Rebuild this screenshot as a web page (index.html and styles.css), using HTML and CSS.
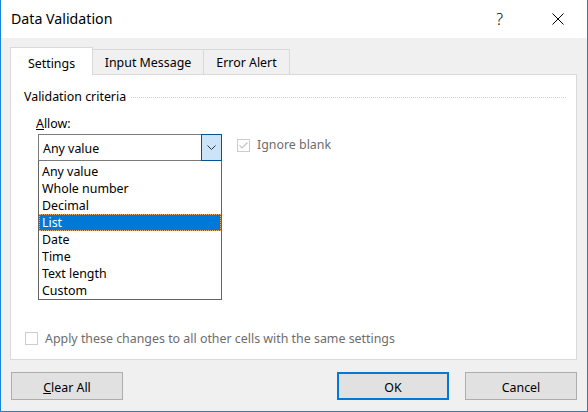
FILE: index.html
```html
<!DOCTYPE html>
<html>
<head>
<meta charset="utf-8">
<link rel="stylesheet" href="styles.css">
</head>
<body>
<div class="window">
  <div class="titlebar">
    <span class="title">Data Validation</span>
    <span class="help">?</span>
    <svg class="close" width="12" height="12" viewBox="0 0 12 12"><path d="M0.5 0.5 L11.5 11.5 M11.5 0.5 L0.5 11.5" stroke="#000" stroke-width="1" fill="none"/></svg>
  </div>
  <div class="body">
    <div class="tabs">
      <div class="tab active">Settings</div>
      <div class="tab tab-input">Input Message</div>
      <div class="tab tab-error">Error Alert</div>
    </div>
    <div class="panel">
      <div class="group-title"><span>Validation criteria</span><span class="rule"></span></div>
      <div class="allow-label"><u>A</u>llow:</div>
      <div class="criteria-row">
        <div class="combo">
          <span class="combo-text">Any value</span>
          <span class="combo-btn"><svg width="9" height="5" viewBox="0 0 9 5"><path d="M0.5 0.5 L4.5 4.5 L8.5 0.5" stroke="#333" stroke-width="1" fill="none"/></svg></span>
          <div class="dropdown">
            <div class="opt">Any value</div>
            <div class="opt">Whole number</div>
            <div class="opt">Decimal</div>
            <div class="opt selected">List</div>
            <div class="opt">Date</div>
            <div class="opt">Time</div>
            <div class="opt">Text length</div>
            <div class="opt">Custom</div>
          </div>
        </div>
        <label class="check disabled ignore">
          <span class="box"><svg width="11" height="11" viewBox="0 0 11 11"><path d="M1.5 5.5 L4 8 L9.5 2.5" stroke="#c6c6c6" stroke-width="1.2" fill="none"/></svg></span>
          <span class="check-text">Ignore blank</span>
        </label>
      </div>
      <label class="check disabled apply">
        <span class="box"></span>
        <span class="check-text">Apply these changes to all other cells with the same settings</span>
      </label>
    </div>
    <div class="buttons">
      <button class="btn"><u>C</u>lear All</button>
      <span class="spacer"></span>
      <button class="btn default">OK</button>
      <button class="btn cancel">Cancel</button>
    </div>
  </div>
</div>
</body>
</html>
```
FILE: styles.css
```css
* { box-sizing: border-box; }
html, body { margin: 0; padding: 0; }
body {
  font-family: "Segoe UI", "Noto Sans", "DejaVu Sans", sans-serif;
  font-size: 12.4px;
  color: #000;
  background: #ffffff;
}
.window {
  width: 588px;
  height: 412px;
  border: 1px solid #1883d7;
  border-top: none;
  display: flex;
  flex-direction: column;
  background: #f0f0f0;
}
.titlebar {
  height: 38px;
  background: #fff;
  display: flex;
  align-items: center;
  flex: none;
}
.title {
  flex: 1;
  padding-left: 10px;
  font-size: 14.2px;
  line-height: 20px;
}
.help {
  font-size: 16px;
  font-weight: 300;
  line-height: 20px;
  margin-right: 49px;
}
.close {
  margin-right: 23px;
  display: block;
}
.body {
  flex: 1;
  padding: 9px 10px 0 9px;
  display: flex;
  flex-direction: column;
}
.tabs {
  display: flex;
  align-items: flex-end;
  height: 27px;
}
.tab {
  height: 25px;
  border: 1px solid #d9d9d9;
  border-bottom: none;
  background: #f0f0f0;
  display: flex;
  align-items: center;
  justify-content: center;
  margin-left: -1px;
  padding-top: 1px;
}
.tab.active {
  width: 83px;
  height: 28px;
  margin-left: 0;
  margin-bottom: -1px;
  background: #fff;
  position: relative;
  z-index: 1;
  padding-top: 3px;
}
.tab-input { width: 112px; }
.tab-error { width: 87px; }
.panel {
  height: 286px;
  border: 1px solid #d9d9d9;
  background: #fff;
  display: flex;
  flex-direction: column;
  padding: 14px 10px 12px 13px;
}
.group-title {
  display: flex;
  align-items: center;
  height: 16px;
  line-height: 16px;
}
.rule {
  flex: 1;
  height: 1px;
  border-top: 1px dotted #cfcfcf;
  margin-left: 5px;
}
.allow-label {
  margin-top: 10px;
  padding-top: 1px;
  height: 16px;
  padding-left: 12px;
  line-height: 16px;
}
.criteria-row {
  margin-top: 3px;
  display: flex;
  align-items: flex-start;
  padding-left: 14px;
}
.combo {
  position: relative;
  width: 184px;
  height: 27px;
  border: 1px solid #7a7a7a;
  display: flex;
  align-items: center;
  background: #fff;
}
.combo-text {
  flex: 1;
  padding-left: 4px;
  padding-top: 2px;
}
.combo-btn {
  width: 21px;
  align-self: stretch;
  margin: -1px -1px -1px 0;
  border: 1px solid #005499;
  background: #cce4f7;
  display: flex;
  align-items: center;
  justify-content: center;
}
.combo-btn svg { display: block; }
.dropdown {
  position: absolute;
  top: calc(100% + 1px);
  left: -1px;
  width: 184px;
  border: 1px solid #646464;
  border-top: none;
  background: #fff;
  padding-top: 2px;
  z-index: 2;
}
.opt {
  height: 17px;
  padding-left: 3px;
  padding-top: 1px;
  line-height: 16px;
}
.opt.selected {
  background: #0078d7;
  color: #fff;
  outline: 1px dotted #e8b070;
  outline-offset: -1px;
}
.check {
  display: flex;
  align-items: center;
  line-height: 16px;
}
.check-text { padding-top: 2px; }
.check.disabled { color: #6d6d6d; }
.box {
  width: 13px;
  height: 13px;
  border: 1px solid #cccccc;
  background: #fff;
  display: flex;
  align-items: center;
  justify-content: center;
  flex: none;
}
.box svg { display: block; }
.ignore {
  margin-left: 15px;
  margin-top: 3px;
  gap: 7px;
}
.ignore .check-text { padding-top: 0; }
.apply {
  margin-top: auto;
  gap: 7px;
  margin-left: 1px;
}
.buttons {
  display: flex;
  margin-top: 12px;
  padding-left: 1px;
}
.spacer { flex: 1; }
.btn {
  width: 112px;
  height: 28px;
  background: #e1e1e1;
  border: 1px solid #adadad;
  font: inherit;
  color: #000;
  padding: 2px 0 0 0;
}
.btn.default {
  border: 2px solid #0078d7;
}
.btn.cancel {
  margin-left: 16px;
}
```
